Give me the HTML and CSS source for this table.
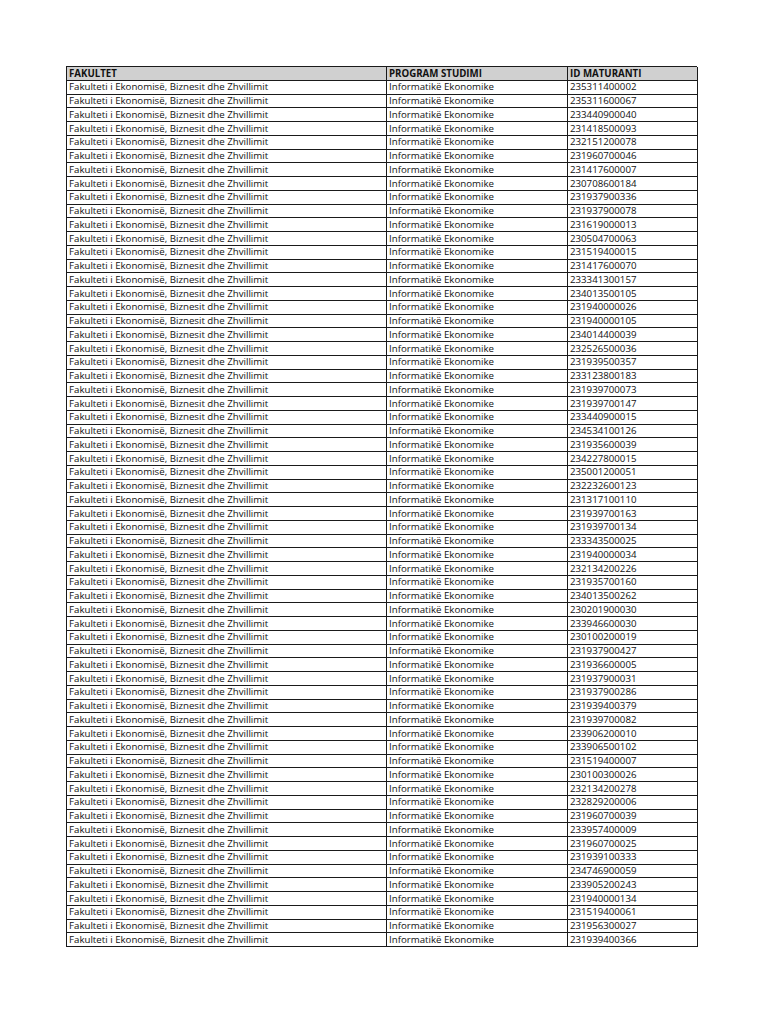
FILE: index.html
```html
<!DOCTYPE html>
<html>
<head>
<meta charset="utf-8">
<link rel="stylesheet" href="styles.css">
</head>
<body>
<div class="page">
<table class="sheet">
<thead>
<tr><th>FAKULTET</th><th>PROGRAM STUDIMI</th><th>ID MATURANTI</th></tr>
</thead>
<tbody>
<tr><td>Fakulteti i Ekonomisë, Biznesit dhe Zhvillimit</td><td>Informatikë Ekonomike</td><td>235311400002</td></tr>
<tr><td>Fakulteti i Ekonomisë, Biznesit dhe Zhvillimit</td><td>Informatikë Ekonomike</td><td>235311600067</td></tr>
<tr><td>Fakulteti i Ekonomisë, Biznesit dhe Zhvillimit</td><td>Informatikë Ekonomike</td><td>233440900040</td></tr>
<tr><td>Fakulteti i Ekonomisë, Biznesit dhe Zhvillimit</td><td>Informatikë Ekonomike</td><td>231418500093</td></tr>
<tr><td>Fakulteti i Ekonomisë, Biznesit dhe Zhvillimit</td><td>Informatikë Ekonomike</td><td>232151200078</td></tr>
<tr><td>Fakulteti i Ekonomisë, Biznesit dhe Zhvillimit</td><td>Informatikë Ekonomike</td><td>231960700046</td></tr>
<tr><td>Fakulteti i Ekonomisë, Biznesit dhe Zhvillimit</td><td>Informatikë Ekonomike</td><td>231417600007</td></tr>
<tr><td>Fakulteti i Ekonomisë, Biznesit dhe Zhvillimit</td><td>Informatikë Ekonomike</td><td>230708600184</td></tr>
<tr><td>Fakulteti i Ekonomisë, Biznesit dhe Zhvillimit</td><td>Informatikë Ekonomike</td><td>231937900336</td></tr>
<tr><td>Fakulteti i Ekonomisë, Biznesit dhe Zhvillimit</td><td>Informatikë Ekonomike</td><td>231937900078</td></tr>
<tr><td>Fakulteti i Ekonomisë, Biznesit dhe Zhvillimit</td><td>Informatikë Ekonomike</td><td>231619000013</td></tr>
<tr><td>Fakulteti i Ekonomisë, Biznesit dhe Zhvillimit</td><td>Informatikë Ekonomike</td><td>230504700063</td></tr>
<tr><td>Fakulteti i Ekonomisë, Biznesit dhe Zhvillimit</td><td>Informatikë Ekonomike</td><td>231519400015</td></tr>
<tr><td>Fakulteti i Ekonomisë, Biznesit dhe Zhvillimit</td><td>Informatikë Ekonomike</td><td>231417600070</td></tr>
<tr><td>Fakulteti i Ekonomisë, Biznesit dhe Zhvillimit</td><td>Informatikë Ekonomike</td><td>233341300157</td></tr>
<tr><td>Fakulteti i Ekonomisë, Biznesit dhe Zhvillimit</td><td>Informatikë Ekonomike</td><td>234013500105</td></tr>
<tr><td>Fakulteti i Ekonomisë, Biznesit dhe Zhvillimit</td><td>Informatikë Ekonomike</td><td>231940000026</td></tr>
<tr><td>Fakulteti i Ekonomisë, Biznesit dhe Zhvillimit</td><td>Informatikë Ekonomike</td><td>231940000105</td></tr>
<tr><td>Fakulteti i Ekonomisë, Biznesit dhe Zhvillimit</td><td>Informatikë Ekonomike</td><td>234014400039</td></tr>
<tr><td>Fakulteti i Ekonomisë, Biznesit dhe Zhvillimit</td><td>Informatikë Ekonomike</td><td>232526500036</td></tr>
<tr><td>Fakulteti i Ekonomisë, Biznesit dhe Zhvillimit</td><td>Informatikë Ekonomike</td><td>231939500357</td></tr>
<tr><td>Fakulteti i Ekonomisë, Biznesit dhe Zhvillimit</td><td>Informatikë Ekonomike</td><td>233123800183</td></tr>
<tr><td>Fakulteti i Ekonomisë, Biznesit dhe Zhvillimit</td><td>Informatikë Ekonomike</td><td>231939700073</td></tr>
<tr><td>Fakulteti i Ekonomisë, Biznesit dhe Zhvillimit</td><td>Informatikë Ekonomike</td><td>231939700147</td></tr>
<tr><td>Fakulteti i Ekonomisë, Biznesit dhe Zhvillimit</td><td>Informatikë Ekonomike</td><td>233440900015</td></tr>
<tr><td>Fakulteti i Ekonomisë, Biznesit dhe Zhvillimit</td><td>Informatikë Ekonomike</td><td>234534100126</td></tr>
<tr><td>Fakulteti i Ekonomisë, Biznesit dhe Zhvillimit</td><td>Informatikë Ekonomike</td><td>231935600039</td></tr>
<tr><td>Fakulteti i Ekonomisë, Biznesit dhe Zhvillimit</td><td>Informatikë Ekonomike</td><td>234227800015</td></tr>
<tr><td>Fakulteti i Ekonomisë, Biznesit dhe Zhvillimit</td><td>Informatikë Ekonomike</td><td>235001200051</td></tr>
<tr><td>Fakulteti i Ekonomisë, Biznesit dhe Zhvillimit</td><td>Informatikë Ekonomike</td><td>232232600123</td></tr>
<tr><td>Fakulteti i Ekonomisë, Biznesit dhe Zhvillimit</td><td>Informatikë Ekonomike</td><td>231317100110</td></tr>
<tr><td>Fakulteti i Ekonomisë, Biznesit dhe Zhvillimit</td><td>Informatikë Ekonomike</td><td>231939700163</td></tr>
<tr><td>Fakulteti i Ekonomisë, Biznesit dhe Zhvillimit</td><td>Informatikë Ekonomike</td><td>231939700134</td></tr>
<tr><td>Fakulteti i Ekonomisë, Biznesit dhe Zhvillimit</td><td>Informatikë Ekonomike</td><td>233343500025</td></tr>
<tr><td>Fakulteti i Ekonomisë, Biznesit dhe Zhvillimit</td><td>Informatikë Ekonomike</td><td>231940000034</td></tr>
<tr><td>Fakulteti i Ekonomisë, Biznesit dhe Zhvillimit</td><td>Informatikë Ekonomike</td><td>232134200226</td></tr>
<tr><td>Fakulteti i Ekonomisë, Biznesit dhe Zhvillimit</td><td>Informatikë Ekonomike</td><td>231935700160</td></tr>
<tr><td>Fakulteti i Ekonomisë, Biznesit dhe Zhvillimit</td><td>Informatikë Ekonomike</td><td>234013500262</td></tr>
<tr><td>Fakulteti i Ekonomisë, Biznesit dhe Zhvillimit</td><td>Informatikë Ekonomike</td><td>230201900030</td></tr>
<tr><td>Fakulteti i Ekonomisë, Biznesit dhe Zhvillimit</td><td>Informatikë Ekonomike</td><td>233946600030</td></tr>
<tr><td>Fakulteti i Ekonomisë, Biznesit dhe Zhvillimit</td><td>Informatikë Ekonomike</td><td>230100200019</td></tr>
<tr><td>Fakulteti i Ekonomisë, Biznesit dhe Zhvillimit</td><td>Informatikë Ekonomike</td><td>231937900427</td></tr>
<tr><td>Fakulteti i Ekonomisë, Biznesit dhe Zhvillimit</td><td>Informatikë Ekonomike</td><td>231936600005</td></tr>
<tr><td>Fakulteti i Ekonomisë, Biznesit dhe Zhvillimit</td><td>Informatikë Ekonomike</td><td>231937900031</td></tr>
<tr><td>Fakulteti i Ekonomisë, Biznesit dhe Zhvillimit</td><td>Informatikë Ekonomike</td><td>231937900286</td></tr>
<tr><td>Fakulteti i Ekonomisë, Biznesit dhe Zhvillimit</td><td>Informatikë Ekonomike</td><td>231939400379</td></tr>
<tr><td>Fakulteti i Ekonomisë, Biznesit dhe Zhvillimit</td><td>Informatikë Ekonomike</td><td>231939700082</td></tr>
<tr><td>Fakulteti i Ekonomisë, Biznesit dhe Zhvillimit</td><td>Informatikë Ekonomike</td><td>233906200010</td></tr>
<tr><td>Fakulteti i Ekonomisë, Biznesit dhe Zhvillimit</td><td>Informatikë Ekonomike</td><td>233906500102</td></tr>
<tr><td>Fakulteti i Ekonomisë, Biznesit dhe Zhvillimit</td><td>Informatikë Ekonomike</td><td>231519400007</td></tr>
<tr><td>Fakulteti i Ekonomisë, Biznesit dhe Zhvillimit</td><td>Informatikë Ekonomike</td><td>230100300026</td></tr>
<tr><td>Fakulteti i Ekonomisë, Biznesit dhe Zhvillimit</td><td>Informatikë Ekonomike</td><td>232134200278</td></tr>
<tr><td>Fakulteti i Ekonomisë, Biznesit dhe Zhvillimit</td><td>Informatikë Ekonomike</td><td>232829200006</td></tr>
<tr><td>Fakulteti i Ekonomisë, Biznesit dhe Zhvillimit</td><td>Informatikë Ekonomike</td><td>231960700039</td></tr>
<tr><td>Fakulteti i Ekonomisë, Biznesit dhe Zhvillimit</td><td>Informatikë Ekonomike</td><td>233957400009</td></tr>
<tr><td>Fakulteti i Ekonomisë, Biznesit dhe Zhvillimit</td><td>Informatikë Ekonomike</td><td>231960700025</td></tr>
<tr><td>Fakulteti i Ekonomisë, Biznesit dhe Zhvillimit</td><td>Informatikë Ekonomike</td><td>231939100333</td></tr>
<tr><td>Fakulteti i Ekonomisë, Biznesit dhe Zhvillimit</td><td>Informatikë Ekonomike</td><td>234746900059</td></tr>
<tr><td>Fakulteti i Ekonomisë, Biznesit dhe Zhvillimit</td><td>Informatikë Ekonomike</td><td>233905200243</td></tr>
<tr><td>Fakulteti i Ekonomisë, Biznesit dhe Zhvillimit</td><td>Informatikë Ekonomike</td><td>231940000134</td></tr>
<tr><td>Fakulteti i Ekonomisë, Biznesit dhe Zhvillimit</td><td>Informatikë Ekonomike</td><td>231519400061</td></tr>
<tr><td>Fakulteti i Ekonomisë, Biznesit dhe Zhvillimit</td><td>Informatikë Ekonomike</td><td>231956300027</td></tr>
<tr><td>Fakulteti i Ekonomisë, Biznesit dhe Zhvillimit</td><td>Informatikë Ekonomike</td><td>231939400366</td></tr>
</tbody>
</table>
</div>
</body>
</html>
```

FILE: styles.css
```css
html, body {
  margin: 0;
  padding: 0;
  background: #ffffff;
}
.page {
  padding: 66px 0 0 66px;
}
.sheet {
  display: grid;
  grid-template-columns: 320px 181px 130px;
  grid-auto-rows: 13.75px;
  width: 631px;
  border-left: 1px solid #1a1a1a;
  border-top: 1px solid #1a1a1a;
  box-sizing: border-box;
  font-family: "Open Sans", "Noto Sans", sans-serif;
  font-size: 9.7px;
  color: #111;
}
.sheet thead,
.sheet tbody,
.sheet tr {
  display: contents;
}
.sheet th,
.sheet td {
  display: flex;
  align-items: center;
  border-right: 1px solid #1a1a1a;
  border-bottom: 1px solid #1a1a1a;
  padding: 0 0 0 2px;
  white-space: nowrap;
  overflow: hidden;
  text-align: left;
  box-sizing: border-box;
  line-height: 1;
}
.sheet th {
  background: #d0d0d0;
  font-weight: 700;
}
```
